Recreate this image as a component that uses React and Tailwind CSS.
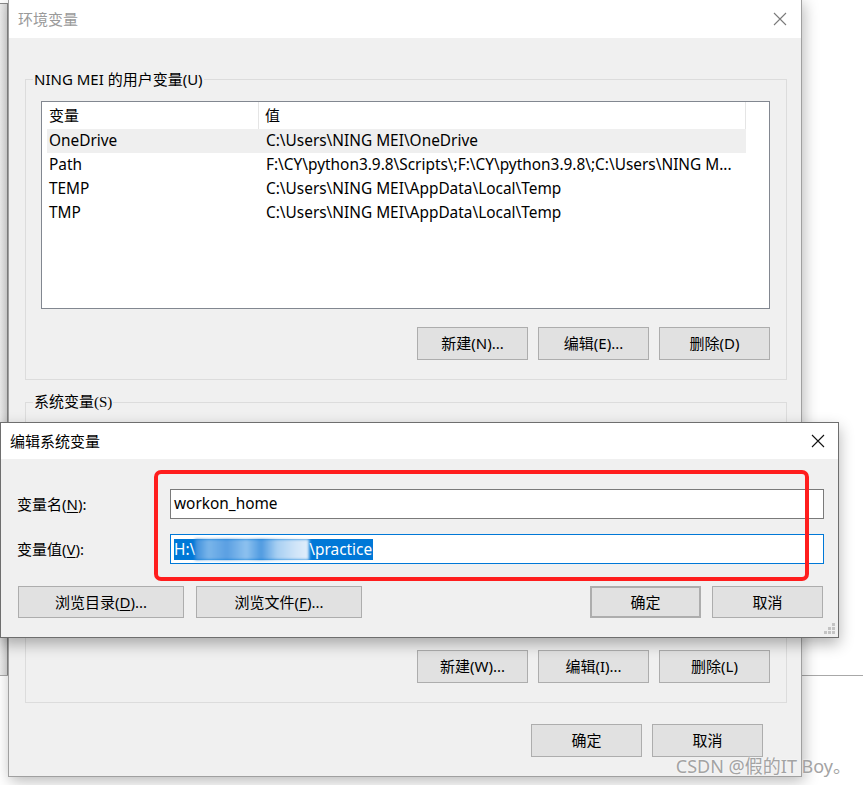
const userVars = [
  ['OneDrive', 'C:\\Users\\NING MEI\\OneDrive'],
  ['Path', 'F:\\CY\\python3.9.8\\Scripts\\;F:\\CY\\python3.9.8\\;C:\\Users\\NING M...'],
  ['TEMP', 'C:\\Users\\NING MEI\\AppData\\Local\\Temp'],
  ['TMP', 'C:\\Users\\NING MEI\\AppData\\Local\\Temp'],
]

function CloseX({ color }) {
  return (
    <svg width="14" height="14" viewBox="0 0 14 14" fill="none">
      <path d="M1 1L13 13M13 1L1 13" stroke={color} strokeWidth="1.1" />
    </svg>
  )
}

function Btn({ children, className = '' }) {
  return (
    <button className={`flex items-center justify-center border border-[#adadad] bg-[#e1e1e1] text-[15px] text-black ${className}`}>
      {children}
    </button>
  )
}

function GroupBox({ label, labelClass = '', rows, header = true, buttons, className = '' }) {
  return (
    <div className={`ml-[16px] mr-[14px] border border-[#dcdcdc] pb-[19px] pl-[15px] pr-[16px] ${className}`}>
      <div className={`-mt-[12px] -ml-[8px] w-fit bg-[#f0f0f0] px-[1px] text-[15px] leading-[22px] text-black ${labelClass}`}>
        {label}
      </div>
      <div className="mt-[11px] h-[208px] border border-[#828790] bg-white">
        {header ? (
          <div className="ml-[5px] w-[699px]">
            <div className="flex h-[27px] items-center border-r border-[#e5e5e5] text-[15px]">
              <div className="w-[212px] border-r border-[#e5e5e5] pl-[2px] leading-[27px]">变量</div>
              <div className="pl-[6px]">值</div>
            </div>
            {rows.map(([k, v], i) => (
              <div key={k} className={`flex h-[24px] items-center text-[15.4px] leading-[24px] ${i === 0 ? 'bg-[#efefef]' : ''}`}>
                <div className="w-[212px] pl-[2px]">{k}</div>
                <div className="whitespace-nowrap pl-[7px]">{v}</div>
              </div>
            ))}
          </div>
        ) : null}
      </div>
      <div className="mt-[18px] flex justify-end gap-[10px]">
        {buttons.map((b) => (
          <Btn key={b} className="h-[33px] w-[111px]">{b}</Btn>
        ))}
      </div>
    </div>
  )
}

function Grip() {
  return (
    <svg width="12" height="12" viewBox="0 0 12 12">
      <rect x="8" y="0" width="3" height="3" fill="#c4c4c4" />
      <rect x="4" y="4" width="3" height="3" fill="#c4c4c4" />
      <rect x="8" y="4" width="3" height="3" fill="#c4c4c4" />
      <rect x="0" y="8" width="3" height="3" fill="#c4c4c4" />
      <rect x="4" y="8" width="3" height="3" fill="#c4c4c4" />
      <rect x="8" y="8" width="3" height="3" fill="#c4c4c4" />
    </svg>
  )
}

export default function App() {
  return (
    <div className="relative h-[785px] w-[863px] overflow-hidden bg-white font-['Noto_Sans','Noto_Sans_CJK_SC',sans-serif] text-black">
      {/* window behind */}
      <div className="absolute left-0 top-0 h-[676px] w-[863px] border-b border-[#a8a8a8] bg-white">
        <div className="mt-[3px] h-[672px] w-[8px] border-t border-r border-[#8a8a8a] bg-[linear-gradient(90deg,#ececec,#dadada)]" />
      </div>

      {/* 环境变量 */}
      <div className="absolute left-[8px] top-[-1px] flex h-[778px] w-[794px] flex-col border border-[#a0a0a0] bg-[#f0f0f0] shadow-[2px_4px_14px_rgba(0,0,0,0.28)]">
        <div className="flex h-[38px] shrink-0 items-center justify-between bg-white pl-[9px] pr-[14px]">
          <span className="text-[15px] text-[#9a9a9a]">环境变量</span>
          <CloseX color="#7a7a7a" />
        </div>
        <GroupBox
          className="mt-[41px]"
          label="NING MEI 的用户变量(U)"
          rows={userVars}
          buttons={['新建(N)...', '编辑(E)...', '删除(D)']}
        />
        <GroupBox
          className="mt-[22px]"
          label="系统变量(S)"
          labelClass="font-['Liberation_Serif','Noto_Sans_CJK_SC',serif]"
          rows={[]}
          header={false}
          buttons={['新建(W)...', '编辑(I)...', '删除(L)']}
        />
        <div className="mr-[38px] mt-[21px] flex justify-end gap-[10px]">
          <Btn className="h-[33px] w-[111px]">确定</Btn>
          <Btn className="h-[33px] w-[111px]">取消</Btn>
        </div>
      </div>

      {/* 编辑系统变量 */}
      <div className="absolute left-0 top-[422px] flex h-[216px] w-[839px] flex-col border border-[#6e6e6e] bg-[#f0f0f0] shadow-[0_6px_14px_rgba(0,0,0,0.3)]">
        <div className="flex h-[36px] shrink-0 items-center justify-between bg-white pl-[9px] pr-[13px]">
          <span className="text-[15px]">编辑系统变量</span>
          <CloseX color="#111" />
        </div>
        <div className="flex-1 pl-[16px] pr-[14px] pt-[30px]">
          <div className="flex items-center">
            <div className="w-[153px] text-[15px]">
              变量名(<span className="underline underline-offset-2">N</span>):
            </div>
            <div className="flex h-[30px] flex-1 items-center border border-[#7a7a7a] bg-white pl-[3px] text-[15.4px]">
              workon_home
            </div>
          </div>
          <div className="mt-[15px] flex items-center">
            <div className="w-[153px] text-[15px]">
              变量值(<span className="underline underline-offset-2">V</span>):
            </div>
            <div className="flex h-[30px] flex-1 items-center border border-[#0078d7] bg-white pl-[3px] text-[15.4px]">
              <span className="flex h-[21px] items-center bg-[#0078d7] pr-[1px] leading-[21px] text-white">
                H:\
                <span className="inline-block h-[21px] w-[114px] bg-[linear-gradient(90deg,#3a8ddb_0%,#7ab5ea_12%,#5a9fe2_28%,#8ec2ef_45%,#4f9ae0_58%,#a7cff2_72%,#cfe4f8_88%,#e2effb_100%)] blur-[1.5px]" />
                \practice
              </span>
            </div>
          </div>
          <div className="mt-[22px] flex items-center">
            <Btn className="ml-[1px] h-[32px] w-[166px]">
              浏览目录(<span className="underline underline-offset-2">D</span>)...
            </Btn>
            <Btn className="ml-[12px] h-[32px] w-[166px]">
              浏览文件(<span className="underline underline-offset-2">F</span>)...
            </Btn>
            <div className="flex-1" />
            <Btn className="h-[32px] w-[111px] border-2 border-[#0078d7]">确定</Btn>
            <Btn className="ml-[11px] mr-[1px] h-[32px] w-[111px]">取消</Btn>
          </div>
        </div>
        <div className="absolute bottom-[2px] right-[2px]">
          <Grip />
        </div>
        {/* annotation */}
        <div className="absolute left-[153px] top-[47px] h-[111px] w-[655px] rounded-[7px] border-[4px] border-[#ff1d1d]" />
      </div>

      <div className="absolute right-[12px] top-[753px] text-[18px] leading-[26px] text-[#a3a3a3] [text-shadow:0_0_2px_#fff]">
        CSDN @假的IT Boy。
      </div>
    </div>
  )
}
